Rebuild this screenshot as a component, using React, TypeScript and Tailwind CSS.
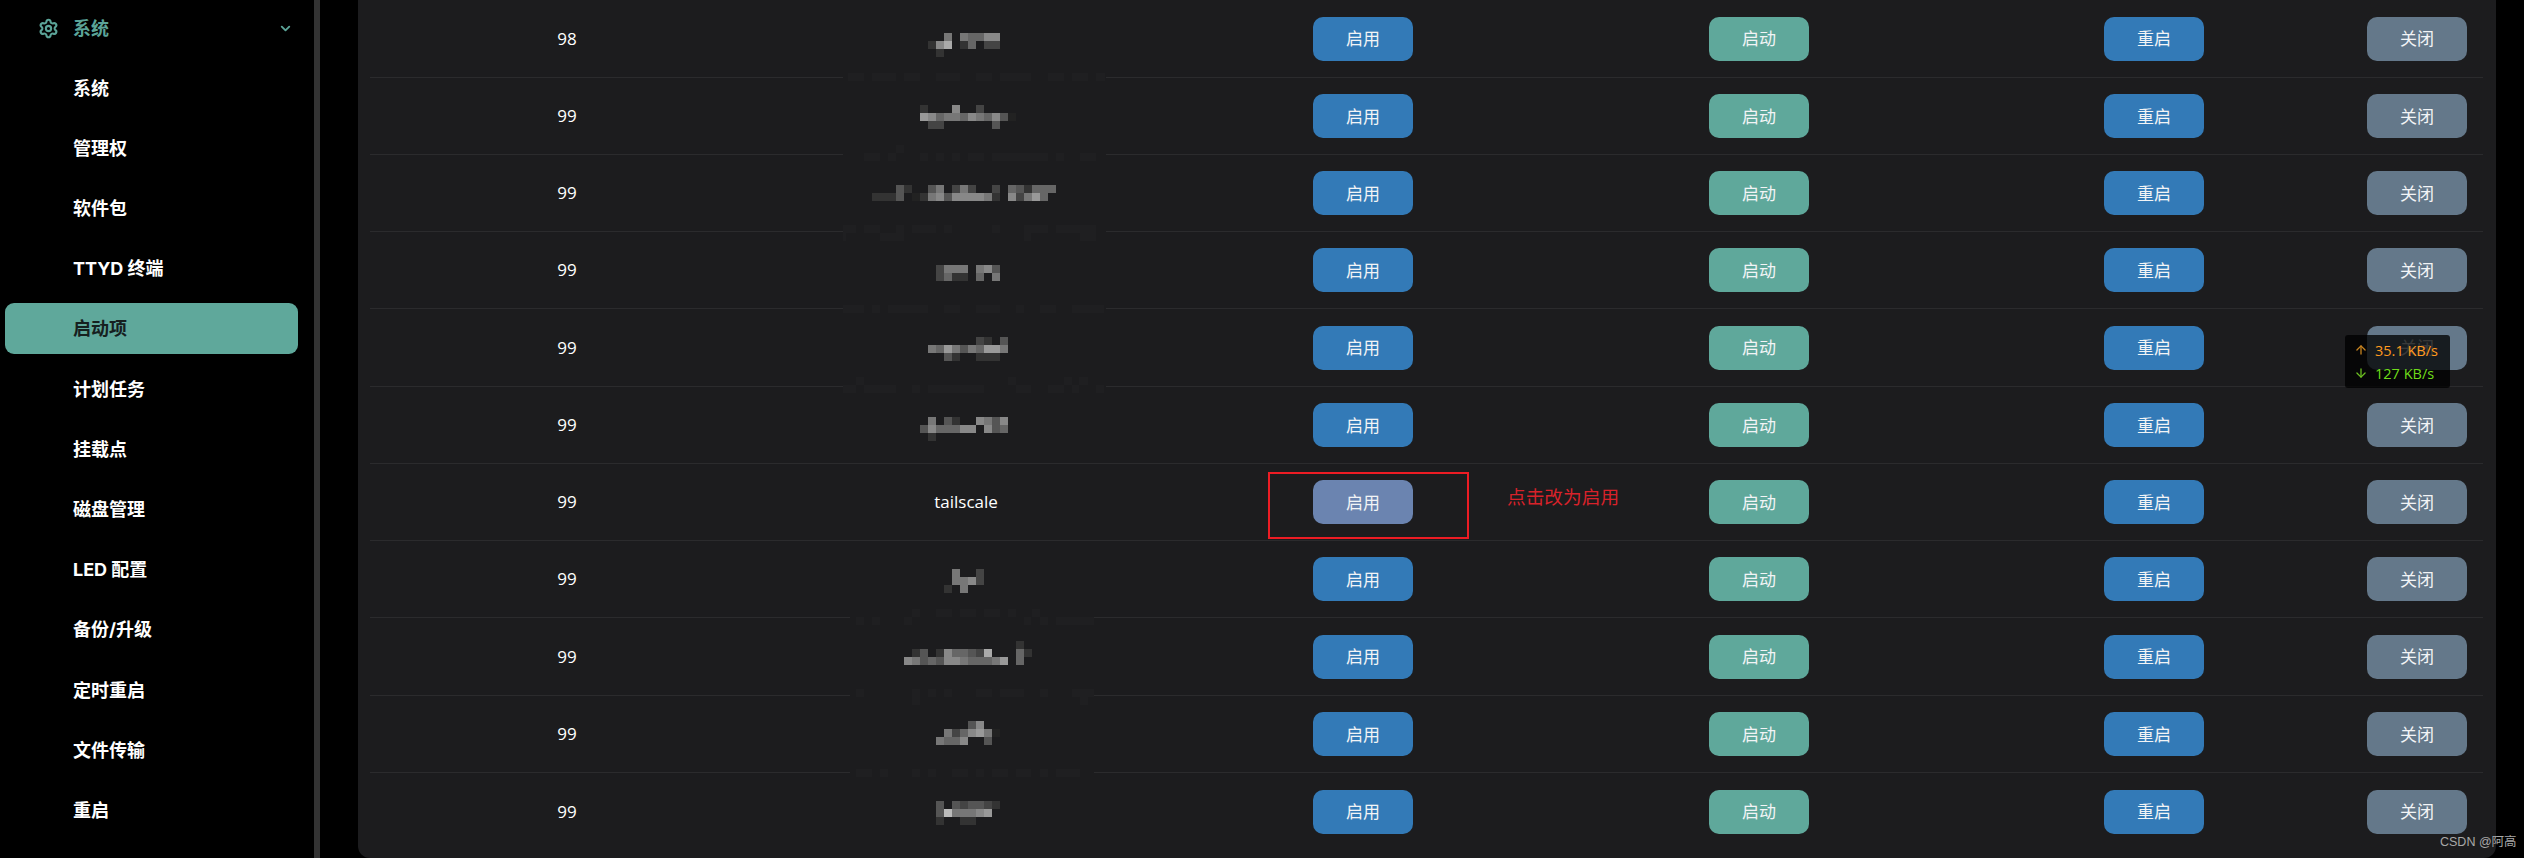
import { ArrowDown, ArrowUp, ChevronDown, Settings } from "lucide-react";

const CJK = "font-['Inter','Noto_Sans_CJK_SC',sans-serif]";

const menu = ["系统", "管理权", "软件包", "TTYD 终端", "启动项", "计划任务", "挂载点", "磁盘管理", "LED 配置", "备份/升级", "定时重启", "文件传输", "重启"];

type Blocks = [number, number, number[][]];
type Row = {
  prio: string;
  h: number;
  name?: string;
  mosaic?: { z: number; y: number; lines: string[] };
  gap?: [number, number, number];
  faint?: Blocks[];
};

const rows: Row[] = [
  {
    prio: "98", h: 78,
    mosaic: { z: 1113, y: 33, lines: ["..7.76688", "38a.36.44", ".3......."] },
    gap: [947, 1462, 77],
    faint: [[73, 8, [[957, 988], [1004, 1051], [1066, 1098], [1129, 1176], [1207, 1238], [1254, 1316], [1348, 1379], [1395, 1426], [1442, 1460]]]],
  },
  {
    prio: "99", h: 77,
    mosaic: { z: 1098, y: 105, lines: ["3...8..4....", "986776876852", ".44......5.."] },
    gap: [947, 1462, 154],
    faint: [
      [145, 8, [[1051, 1066]]],
      [153, 8, [[988, 1019], [1035, 1051], [1098, 1113], [1129, 1145], [1160, 1176], [1192, 1223], [1238, 1348], [1364, 1379], [1411, 1442]]],
    ],
  },
  {
    prio: "99", h: 77,
    mosaic: { z: 1004, y: 185, lines: ["...53..57.474..4.653666", "3335.23785888873.84796."] },
    gap: [947, 1462, 231],
    faint: [
      [225, 8, [[947, 972], [988, 1019], [1051, 1066], [1082, 1129], [1145, 1160], [1238, 1254], [1301, 1348], [1364, 1442]]],
      [233, 8, [[947, 952], [1019, 1066], [1301, 1316], [1411, 1442]]],
    ],
  },
  {
    prio: "99", h: 77,
    mosaic: { z: 1129, y: 265, lines: ["4777.785", "4633.6.7"] },
    gap: [947, 1462, 308],
    faint: [[305, 8, [[947, 988], [1004, 1019], [1035, 1113], [1145, 1176], [1207, 1254], [1285, 1301], [1332, 1364], [1395, 1458]]]],
  },
  {
    prio: "99", h: 78,
    mosaic: { z: 1113, y: 337, lines: ["......43.5", "7697576997", "..53..333."] },
    gap: [947, 1462, 386],
    faint: [
      [377, 8, [[972, 988], [1270, 1285], [1379, 1395], [1410, 1426]]],
      [385, 8, [[947, 972], [988, 1051], [1082, 1098], [1113, 1223], [1285, 1316], [1348, 1379], [1395, 1410], [1442, 1458]]],
    ],
  },
  { prio: "99", h: 77, mosaic: { z: 1098, y: 417, lines: [".7.53..8758", "5866688.856", ".3........."] } },
  { prio: "99", h: 77, name: "tailscale" },
  {
    prio: "99", h: 77,
    mosaic: { z: 1145, y: 569, lines: [".7..4", ".7784", "3.7.."] },
    gap: [960, 1438, 617],
    faint: [
      [609, 8, [[1082, 1098], [1129, 1160], [1176, 1207], [1223, 1254], [1270, 1285], [1317, 1332]]],
      [617, 8, [[972, 988], [1004, 1019], [1066, 1082], [1301, 1316], [1332, 1348], [1364, 1438]]],
    ],
  },
  {
    prio: "99", h: 78,
    mosaic: { z: 1066, y: 641, lines: ["..............3.", ".35.386654a...63", "8756588766679.6."] },
    gap: [960, 1438, 695],
    faint: [
      [689, 8, [[972, 988], [1082, 1098], [1113, 1129], [1145, 1160], [1207, 1238], [1254, 1301], [1332, 1348], [1395, 1438]]],
      [697, 8, [[1082, 1098], [1411, 1426]]],
    ],
  },
  {
    prio: "99", h: 77,
    mosaic: { z: 1129, y: 721, lines: ["....58..", ".7468972", "7668..5."] },
    gap: [960, 1438, 772],
    faint: [[769, 8, [[972, 1004], [1019, 1035], [1082, 1098], [1113, 1129], [1160, 1192], [1207, 1223], [1238, 1270], [1285, 1316], [1332, 1348], [1364, 1411]]]],
  },
  { prio: "99", h: 77, mosaic: { z: 1129, y: 801, lines: ["5.545543", "5b77789.", "3..33..."] } },
];

const zx = (z: number) => 360 + z / 1.96;

function Redacted({ row, top, inner }: { row: Row; top: number; inner: number }) {
  return (
    <svg className="block overflow-visible" width={404} height={inner} viewBox={`764 ${top} 404 ${inner}`} shapeRendering="crispEdges">
      {row.gap && <rect x={zx(row.gap[0])} y={row.gap[2]} width={(row.gap[1] - row.gap[0]) / 1.96} height={1} fill="#1c1c1e" />}
      {row.faint?.map(([y, h, spans]) =>
        spans.map(([a, b]) => <rect key={`${y}-${a}`} x={zx(a)} y={y} width={(b - a) / 1.96} height={h} fill="#1f1f21" />)
      )}
      {row.mosaic?.lines.map((line, li) =>
        line.split("").map((c, ci) => {
          if (c === ".") return null;
          const v = parseInt(c, 16) * 17;
          return <rect key={`${li}-${ci}`} x={zx(row.mosaic!.z) + ci * 8} y={row.mosaic!.y + li * 8} width={8} height={8} fill={`rgb(${v},${v},${v})`} />;
        })
      )}
    </svg>
  );
}

function Btn({ label, color }: { label: string; color: string }) {
  return (
    <button className={`w-[100px] h-[44px] rounded-[10px] text-[17px] leading-none text-[#f2f4f6] ${color}`}>{label}</button>
  );
}

export default function App() {
  let y = 0;
  return (
    <div className={`relative flex h-[858px] w-[2524px] overflow-hidden bg-black ${CJK}`}>
      <aside className="flex w-[314px] shrink-0 flex-col gap-[9.2px] pt-[2.5px]">
        <div className="flex h-[51px] w-[298px] shrink-0 items-center justify-between pl-[38px] pr-[5px] text-[#5ba498]">
          <div className="flex items-center gap-[14px]">
            <Settings size={21} strokeWidth={2.4} />
            <span className="text-[18px] font-bold">系统</span>
          </div>
          <ChevronDown size={15} strokeWidth={3} />
        </div>
        {menu.map((m) => (
          <div
            key={m}
            className={
              m === "启动项"
                ? "ml-[5px] flex h-[51px] w-[293px] shrink-0 items-center rounded-[9px] bg-[#5fa89b] pl-[68px] text-[18px] font-bold text-[#16201f]"
                : "ml-[5px] flex h-[51px] w-[293px] shrink-0 items-center pl-[68px] text-[18px] font-bold text-white"
            }
          >
            {m}
          </div>
        ))}
      </aside>
      <div className="w-[6px] shrink-0 bg-[#333333]" />
      <main className="ml-[38px] h-full w-[2138px] shrink-0 rounded-b-[12px] bg-[#1c1c1e] pl-[12px] pr-[13px] font-['Open_Sans','Noto_Sans_CJK_SC',sans-serif]">
        {rows.map((r, i) => {
          const top = y;
          y += r.h;
          const last = i === rows.length - 1;
          return (
            <div
              key={i}
              className={`grid grid-cols-[394px_404px_390px_402px_388px_135px] items-center ${r.h === 78 ? "h-[78px]" : "h-[77px]"} ${last ? "" : "border-b border-[#2b2b2d]"}`}
            >
              <div className="flex justify-center text-[17px] text-white">{r.prio}</div>
              <div className="flex h-full items-center justify-center">
                {r.name ? (
                  <span className="text-[17px] text-white">{r.name}</span>
                ) : (
                  <Redacted row={r} top={top} inner={last ? r.h : r.h - 1} />
                )}
              </div>
              <div className="flex justify-center">
                <Btn label="启用" color={r.name ? "bg-[#6b84b0]" : "bg-[#337ab7]"} />
              </div>
              <div className="flex justify-center">
                <Btn label="启动" color="bg-[#5fa89b]" />
              </div>
              <div className="flex justify-center">
                <Btn label="重启" color="bg-[#337ab7]" />
              </div>
              <div className="flex justify-center pl-[3px]">
                <Btn label="关闭" color="bg-[#64788a]" />
              </div>
            </div>
          );
        })}
      </main>

      {/* annotation drawn over the table */}
      <div className="absolute left-[1268px] top-[472px] h-[67px] w-[201px] border-2 border-[#ed1c24]" />
      <span className="absolute left-[1507px] top-[482px] text-[18.7px] leading-[28px] text-[#d8222a] font-['Noto_Sans_CJK_SC',sans-serif]">点击改为启用</span>

      {/* floating network speed widget */}
      <div className="absolute left-[2345px] top-[335px] flex h-[53px] w-[105px] flex-col justify-center gap-[4px] rounded-[3px] bg-[#000000c4] pl-[9px] font-['Open_Sans',sans-serif] text-[14.5px] leading-[19px]">
        <div className="flex items-center gap-[7px] text-[#ff9a1e]">
          <ArrowUp size={14} strokeWidth={2.2} className="text-[#c98520]" />
          <span>35.1 KB/s</span>
        </div>
        <div className="flex items-center gap-[7px] text-[#6fdc1a]">
          <ArrowDown size={14} strokeWidth={2.2} className="text-[#6cc022]" />
          <span>127 KB/s</span>
        </div>
      </div>

      <span className="absolute left-[2440px] top-[833px] text-[12.5px] leading-[18px] text-[#a8a8a8] font-['Liberation_Sans','Noto_Sans_CJK_SC',sans-serif]">CSDN @阿高</span>
    </div>
  );
}
